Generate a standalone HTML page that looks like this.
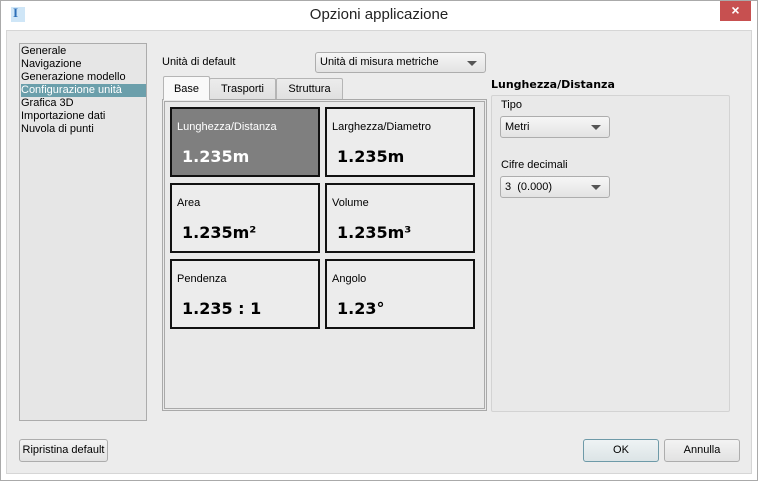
<!DOCTYPE html>
<html><head><meta charset="utf-8"><style>
*{margin:0;padding:0;box-sizing:border-box}
body{width:758px;height:481px;position:relative;background:#fff;font-family:"Liberation Sans","DejaVu Sans",sans-serif;font-size:11px;color:#000;overflow:hidden}
.a{position:absolute}
.win{left:0;top:0;width:758px;height:481px;border:1px solid #aaa;background:#fff}
.body{left:6px;top:30px;width:746px;height:444px;background:#ececec;border:1px solid #d6d6d6}
.list{left:19px;top:43px;width:128px;height:378px;background:#e6e6e6;border:1px solid #acacac}
.li{position:absolute;left:1px;width:125px;height:13px;line-height:13px;white-space:nowrap}
.sel{background:#6b9fab;color:#fff}
.combo{border:1px solid #adadad;border-radius:3px;background:linear-gradient(#f6f6f6,#e3e3e3);padding-left:4px;line-height:18px}
.arr{position:absolute;right:8px;top:8px;width:0;height:0;border-left:5px solid transparent;border-right:5px solid transparent;border-top:5px solid #555}
.tab{border:1px solid #b5b5b5;border-bottom:none;background:linear-gradient(#ececec,#e0e0e0);text-align:center;border-radius:2px 2px 0 0}
.card{position:absolute;width:150px;height:70px;border:2px solid #111;background:#ececec}
.card .l{position:absolute;left:5px;top:12px;font-size:11px}
.card .v{position:absolute;left:10px;top:38px;font-size:16px;font-weight:bold;font-family:"DejaVu Sans","Liberation Sans",sans-serif}
.btn{border:1px solid #adadad;border-radius:3px;background:linear-gradient(#f3f3f3,#e2e2e2);text-align:center;line-height:20px}
</style></head><body>
<div class="a win"></div>
<div class="a" style="left:11px;top:7px;width:14px;height:15px;background:#cfe6f7"></div>
<div class="a" style="left:13px;top:5px;font:bold 13px 'Liberation Serif',serif;color:#2c6fb8">I</div>
<div class="a" style="left:0;top:6px;width:758px;text-align:center;font-size:15px;color:#222">Opzioni applicazione</div>
<div class="a" style="left:720px;top:1px;width:31px;height:20px;background:#c75050;color:#fff;text-align:center;font-size:14px;line-height:19px;font-weight:bold">×</div>
<div class="a body"></div>
<div class="a list">
<div class="li" style="top:1px">Generale</div>
<div class="li" style="top:14px">Navigazione</div>
<div class="li" style="top:27px">Generazione modello</div>
<div class="li sel" style="top:40px">Configurazione unità</div>
<div class="li" style="top:53px">Grafica 3D</div>
<div class="li" style="top:66px">Importazione dati</div>
<div class="li" style="top:79px">Nuvola di punti</div>
</div>
<div class="a" style="left:162px;top:56px">Unità di default</div>
<div class="a combo" style="left:315px;top:52px;width:171px;height:21px">Unità di misura metriche<div class="arr"></div></div>
<div class="a" style="left:162px;top:99px;width:325px;height:312px;border:1px solid #a9a9a9;background:#e9e9e9"></div>
<div class="a" style="left:164px;top:101px;width:321px;height:308px;border:1px solid #a9a9a9"></div>
<div class="a tab" style="left:209px;top:78px;width:67px;height:21px;line-height:21px">Trasporti</div>
<div class="a tab" style="left:276px;top:78px;width:67px;height:21px;line-height:21px">Struttura</div>
<div class="a tab" style="left:163px;top:76px;width:47px;height:24px;line-height:24px;background:#f9f9f9">Base</div>
<div class="card" style="left:170px;top:107px;background:#7f7f7f;color:#fff"><div class="l">Lunghezza/Distanza</div><div class="v">1.235m</div></div>
<div class="card" style="left:325px;top:107px"><div class="l">Larghezza/Diametro</div><div class="v">1.235m</div></div>
<div class="card" style="left:170px;top:183px"><div class="l">Area</div><div class="v">1.235m²</div></div>
<div class="card" style="left:325px;top:183px"><div class="l">Volume</div><div class="v">1.235m³</div></div>
<div class="card" style="left:170px;top:259px"><div class="l">Pendenza</div><div class="v">1.235 : 1</div></div>
<div class="card" style="left:325px;top:259px"><div class="l">Angolo</div><div class="v">1.23°</div></div>
<div class="a" style="left:491px;top:78px;font-weight:bold;font-family:'DejaVu Sans',sans-serif;font-size:11px">Lunghezza/Distanza</div>
<div class="a" style="left:491px;top:95px;width:239px;height:317px;border:1px solid #d3d3d3;background:#e9e9e9;border-radius:2px"></div>
<div class="a" style="left:501px;top:99px">Tipo</div>
<div class="a combo" style="left:500px;top:116px;width:110px;height:22px;line-height:20px">Metri<div class="arr"></div></div>
<div class="a" style="left:501px;top:159px">Cifre decimali</div>
<div class="a combo" style="left:500px;top:176px;width:110px;height:22px;line-height:20px">3&nbsp; (0.000)<div class="arr"></div></div>
<div class="a btn" style="left:19px;top:439px;width:89px;height:23px">Ripristina default</div>
<div class="a btn" style="left:583px;top:439px;width:76px;height:23px;border-color:#6e9aa8;background:linear-gradient(#eef3f4,#dce4e6)">OK</div>
<div class="a btn" style="left:664px;top:439px;width:76px;height:23px">Annulla</div>
</body></html>
